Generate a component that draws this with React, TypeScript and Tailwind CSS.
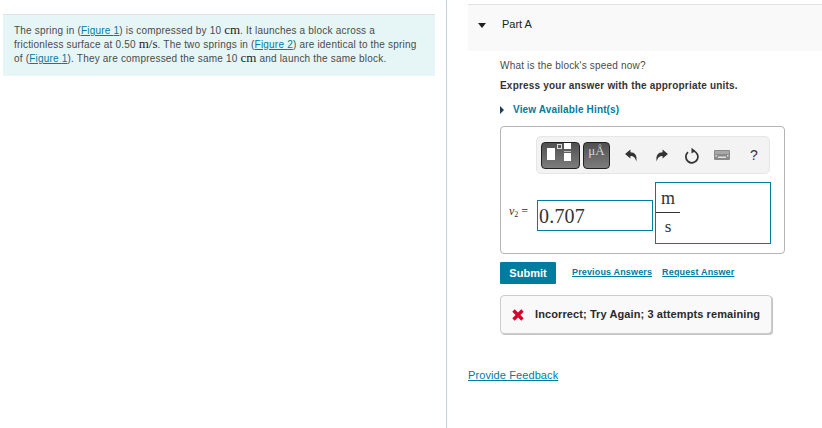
const sans = "font-['Liberation_Sans',Arial,sans-serif]";
const serif = "font-['Liberation_Serif','Times_New_Roman',serif]";

const FigureLink = ({ n }: { n: number }) => (
  <a className="text-[#007c9e] underline">Figure {n}</a>
);

const Unit = ({ children }: { children: string }) => (
  <span className={`${serif} text-[13px] leading-[10px] tracking-normal text-[#222]`}>{children}</span>
);

const ArrowIcon = ({ flip }: { flip?: boolean }) => (
  <svg width="15" height="15" viewBox="0 0 14 14" className={flip ? "-scale-x-100" : ""}>
    <path d="M1 5.5 L6 1.5 V4 C10 4 12.5 6.5 11.5 12.5 C10.5 9 9 7.5 6 7.5 V9.8 Z" fill="#333" />
  </svg>
);

const RedoCircle = () => (
  <svg width="16" height="17" viewBox="0 0 16 17">
    <path d="M9.5 4 A6 6 0 1 1 4 5.2" fill="none" stroke="#333" strokeWidth="1.7" />
    <path d="M7.5 0.8 L11.6 3.9 L7.5 6.6 Z" fill="#333" />
  </svg>
);

const KeyboardIcon = () => (
  <svg width="16" height="10" viewBox="0 0 16 10">
    <rect x="0" y="0" width="16" height="10" rx="1" fill="#8a8a8a" />
    <rect x="1" y="1" width="14" height="3" fill="#a8a8a8" />
    <rect x="4" y="6.5" width="8" height="1.5" fill="#e0e0e0" />
    <rect x="1.5" y="5" width="1.5" height="1.5" fill="#e0e0e0" />
    <rect x="13" y="5" width="1.5" height="1.5" fill="#e0e0e0" />
  </svg>
);

const App = () => {
  return (
    <div className={`${sans} flex h-[428px] w-[822px] overflow-hidden bg-white`}>
      <div className="h-full w-[447px] shrink-0 border-r border-[#c3d2e3] pt-[14px] pl-[3px]">
        <div className="h-[62px] w-[432px] border-t border-[#dfe3e3] bg-[#e6f6f7] pt-[9px] pl-[11px] text-[10px] leading-[14px] tracking-[0.2px] whitespace-nowrap text-[#4a4a4a]">
          <p>
            The spring in (<FigureLink n={1} />) is compressed by 10 <Unit>cm</Unit>. It launches a block across a
          </p>
          <p>
            frictionless surface at 0.50 <Unit>m/s</Unit>. The two springs in (<FigureLink n={2} />) are identical to the spring
          </p>
          <p>
            of (<FigureLink n={1} />). They are compressed the same 10 <Unit>cm</Unit> and launch the same block.
          </p>
        </div>
      </div>

      <div className="min-w-0 flex-1 pt-[4px] pl-[21px]">
        <div className="flex h-[47px] items-start border-t border-[#e2e2e2] bg-[#f9f9f9] pt-[12px]">
          <span className="mt-[6px] ml-[10px] h-0 w-0 border-x-[4px] border-t-[5px] border-x-transparent border-t-[#1f1f1f]" />
          <span className="ml-[16px] text-[11px] leading-[14px] text-[#222]">Part A</span>
        </div>

        <div className="pl-[32px]">
          <p className="mt-[8px] text-[10px] leading-[14px] tracking-[0.2px] text-[#4a4a4a]">What is the block's speed now?</p>
          <p className="mt-[6px] text-[10px] leading-[14px] font-bold tracking-[0.2px] text-[#333]">Express your answer with the appropriate units.</p>
          <div className="mt-[10px] flex items-center text-[10px] leading-[14px] font-bold tracking-[0.15px] text-[#007c9e]">
            <span className="h-0 w-0 border-y-[4px] border-l-[4px] border-y-transparent border-l-[#1c3f57]" />
            <span className="ml-[9px]">View Available Hint(s)</span>
          </div>

          <div className="mt-[9px] h-[128px] w-[285px] rounded-[4px] border border-[#b4b4b4] pt-[9px] pl-[35px]">
            <div className="flex h-[38px] w-[234px] items-center rounded-[5px] border border-[#e6e6e6] bg-[#f3f3f3] pl-[4px]">
              <div className="relative h-[27px] w-[39px] rounded-[4px] border border-[#222] bg-gradient-to-b from-[#505050] to-[#7d7d7d]">
                <span className="absolute top-[5px] left-[5px] h-[12px] w-[8px] bg-white" />
                <span className="absolute top-[1px] left-[15px] h-[5px] w-[5px] border border-[#ddd]" />
                <span className="absolute top-[0px] left-[22px] h-[6px] w-[7px] bg-white" />
                <span className="absolute top-[8px] left-[22px] h-[1px] w-[7px] bg-[#bbb]" />
                <span className="absolute top-[10px] left-[22px] h-[8px] w-[7px] bg-white" />
              </div>
              <div className={`${serif} ml-[3px] h-[27px] w-[27px] rounded-[4px] border border-[#222] bg-gradient-to-b from-[#505050] to-[#7d7d7d] pt-[1px] text-center text-[13px] leading-[14px] text-[#d8d8d8]`}>
                μÅ
              </div>
              <span className="ml-[14px] flex w-[15px] justify-center"><ArrowIcon /></span>
              <span className="ml-[15px] flex w-[15px] justify-center"><ArrowIcon flip /></span>
              <span className="ml-[15px] flex w-[16px] justify-center"><RedoCircle /></span>
              <span className="ml-[14px] flex w-[16px] justify-center"><KeyboardIcon /></span>
              <span className="ml-[20px] text-[14px] text-[#333]">?</span>
            </div>

            <div className="mt-[8px] -ml-[27px] flex items-start">
              <span className={`${serif} mt-[21px] w-[28px] text-[12px] leading-[16px] text-[#333]`}>
                <i>v</i><sub className="text-[8px]">2</sub> =
              </span>
              <div className={`${serif} mt-[18px] flex h-[31px] w-[116px] items-center border border-[#007c9e] pt-[1px] pl-[1px] text-[20px] tracking-[0.2px] text-[#333]`}>
                0.707
              </div>
              <div className={`${serif} ml-[2px] flex h-[62px] w-[116px] flex-col border border-[#007c9e] text-[#333]`}>
                <span className="w-[24px] border-b border-[#333] pt-[3px] pb-[2px] text-center text-[18px] leading-[24px]">m</span>
                <span className="w-[24px] pt-[2px] text-center text-[17px] leading-[24px]">s</span>
              </div>
            </div>
          </div>

          <div className="mt-[8px] flex items-center">
            <button className="h-[22px] w-[56px] rounded-[1px] bg-[#007c9e] text-[11px] font-bold text-white">Submit</button>
            <a className="ml-[16px] text-[9px] font-bold tracking-[0.15px] text-[#007c9e] underline">Previous Answers</a>
            <a className="ml-[10px] text-[9px] font-bold tracking-[0.15px] text-[#007c9e] underline">Request Answer</a>
          </div>

          <div className="mt-[11px] flex h-[39px] w-[272px] items-center rounded-[4px] border border-[#ccc] bg-[#f9f9f9] pl-[11px] shadow-[1px_1px_0_#c4c4c4]">
            <svg width="12" height="12" viewBox="0 0 12 12">
              <path d="M1.5 1.5 L10.5 10.5 M10.5 1.5 L1.5 10.5" stroke="#d9042b" strokeWidth="3.4" />
            </svg>
            <span className="ml-[11px] text-[11px] font-bold tracking-[0.1px] text-[#2a2a2a]">Incorrect; Try Again; 3 attempts remaining</span>
          </div>
        </div>

        <a className="mt-[34px] block w-fit text-[11px] leading-[14px] tracking-[0.1px] text-[#007c9e] underline">Provide Feedback</a>
      </div>
    </div>
  );
};

export default App;
